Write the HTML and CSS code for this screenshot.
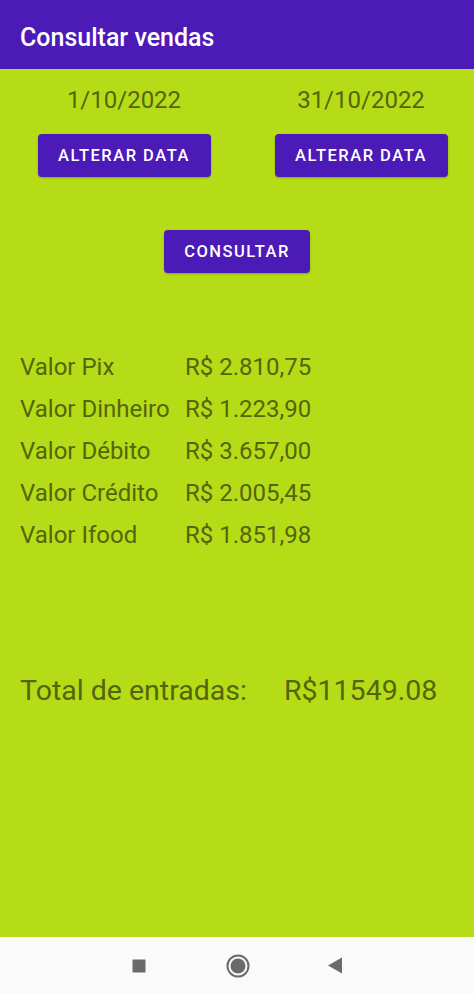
FILE: index.html
```html
<!DOCTYPE html>
<html lang="pt-BR">
<head>
	<meta charset="utf-8">
	<title>Consultar vendas</title>
	<link rel="stylesheet" href="styles.css">
</head>
<body>
	<div class="screen">
		<div class="toolbar">Consultar vendas</div>
		<div class="content">
			<div class="dates">
				<div class="date_col">
					<div class="date_txt">1/10/2022</div>
					<button class="btn">ALTERAR DATA</button>
				</div>
				<div class="date_col">
					<div class="date_txt">31/10/2022</div>
					<button class="btn">ALTERAR DATA</button>
				</div>
			</div>
			<div class="consult">
				<button class="btn btn_consult">CONSULTAR</button>
			</div>
			<div class="values">
				<div class="label">Valor Pix</div><div class="val">R$ 2.810,75</div>
				<div class="label">Valor Dinheiro</div><div class="val">R$ 1.223,90</div>
				<div class="label">Valor Débito</div><div class="val">R$ 3.657,00</div>
				<div class="label">Valor Crédito</div><div class="val">R$ 2.005,45</div>
				<div class="label">Valor Ifood</div><div class="val">R$ 1.851,98</div>
			</div>
			<div class="total">
				<span class="total_label">Total de entradas:</span>
				<span class="total_val">R$11549.08</span>
			</div>
		</div>
		<div class="navbar">
			<svg width="14" height="14" viewBox="0 0 14 14"><rect x="0.5" y="0.5" width="13" height="13" fill="#6a6a6a"/></svg>
			<svg width="24" height="24" viewBox="0 0 24 24"><circle cx="12" cy="12" r="10.5" fill="none" stroke="#6a6a6a" stroke-width="2"/><circle cx="12" cy="12" r="7.5" fill="#6a6a6a"/></svg>
			<svg width="16" height="17" viewBox="0 0 16 17"><polygon points="15,0.5 15,16.5 1,8.5" fill="#6a6a6a"/></svg>
		</div>
	</div>
</body>
</html>
```

FILE: styles.css
```css
html, body {
	margin: 0;
	padding: 0;
}
body {
	font-family: Roboto, "Liberation Sans", sans-serif;
	background: #b6dc17;
}
.screen {
	width: 474px;
	height: 994px;
	display: flex;
	flex-direction: column;
}
.toolbar {
	height: 69px;
	background: #4c1ab6;
	color: #fff;
	font-size: 25px;
	font-weight: 500;
	line-height: 76px;
	padding-left: 20px;
	box-sizing: border-box;
}
.content {
	flex: 1;
	background: #b6dc17;
	color: #54650b;
}
.dates {
	display: grid;
	grid-template-columns: 248px 226px;
	padding-top: 16px;
}
.date_col {
	display: flex;
	flex-direction: column;
	align-items: center;
}
.date_txt {
	font-size: 24px;
	line-height: 30px;
	height: 49px;
}
.btn {
	width: 173px;
	height: 43px;
	border: none;
	border-radius: 4px;
	background: #4c1ab6;
	color: #fff;
	font-family: Roboto, "Liberation Sans", sans-serif;
	font-size: 16.5px;
	font-weight: 500;
	letter-spacing: 1.5px;
	padding: 0;
	box-shadow: 0 1px 2px rgba(0,0,0,0.25);
}
.consult {
	display: flex;
	justify-content: center;
	padding-top: 53px;
}
.btn_consult {
	width: 146px;
}
.values {
	display: grid;
	grid-template-columns: 165px auto;
	padding: 73px 0 0 20px;
	font-size: 24px;
	line-height: 42px;
}
.total {
	padding: 115px 0 0 20px;
	font-size: 28.5px;
	line-height: 40px;
	display: flex;
}
.total_label {
	width: 264px;
}
.navbar {
	height: 57px;
	background: #fafafa;
	display: flex;
	align-items: center;
	justify-content: center;
}
.navbar svg:nth-child(1) {
	margin-right: 80px;
}
.navbar svg:nth-child(3) {
	margin-left: 77px;
}
```
